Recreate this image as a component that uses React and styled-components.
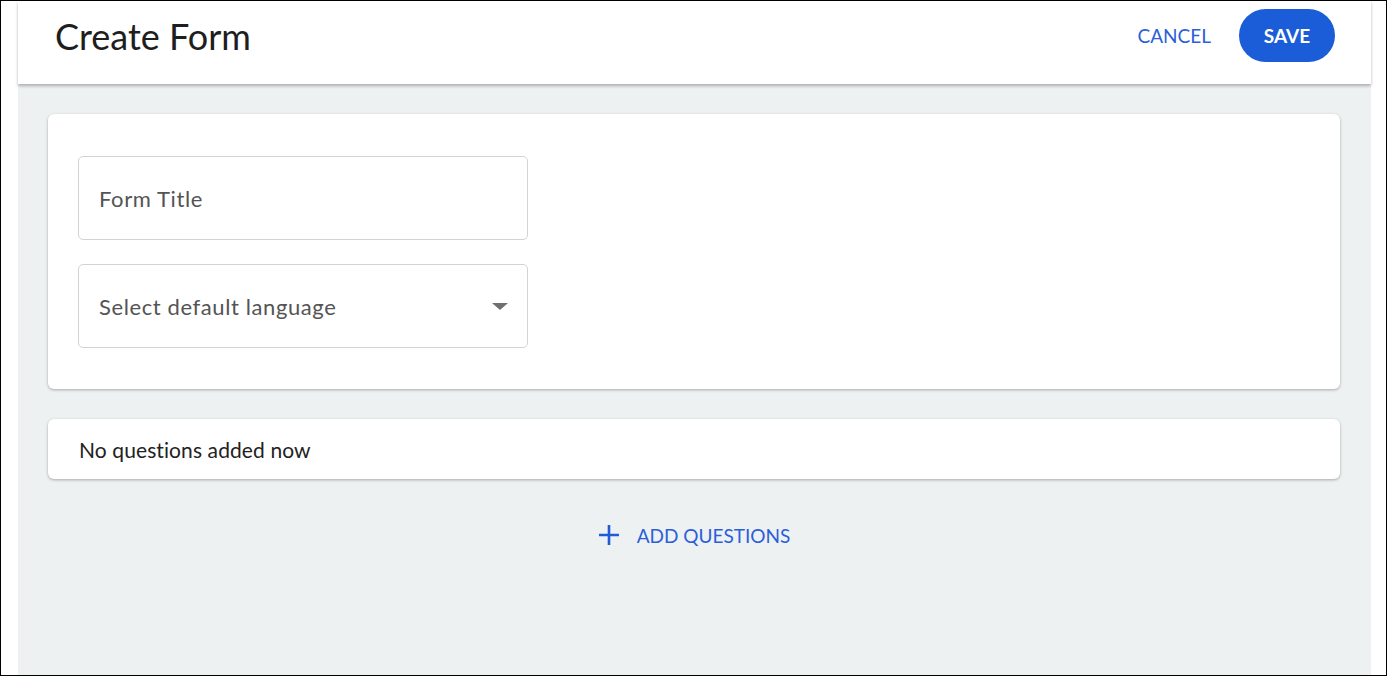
import React from 'react'
import styled, { createGlobalStyle } from 'styled-components'

const GlobalStyle = createGlobalStyle`
  html, body {
    margin: 0;
    padding: 0;
    background: #fff;
  }
  body {
    font-family: Lato, "Noto Sans", sans-serif;
  }
`

function App() {
  return (
    <>
      <GlobalStyle />
      <Frame>
        <Header>
          <Title>Create Form</Title>
          <Actions>
            <TextButton>Cancel</TextButton>
            <SaveButton>Save</SaveButton>
          </Actions>
        </Header>

        <Content>
          <Card>
            <Field>
              <FieldText>Form Title</FieldText>
            </Field>
            <Field>
              <FieldText>Select default language</FieldText>
              <Caret />
            </Field>
          </Card>

          <EmptyCard>No questions added now</EmptyCard>

          <AddRow>
            <AddButton>
              <svg width="22" height="22" viewBox="0 0 22 22">
                <path d="M11 1v20M1 11h20" stroke="#1f5bd8" strokeWidth="2.6" fill="none" />
              </svg>
              Add Questions
            </AddButton>
          </AddRow>
        </Content>
      </Frame>
    </>
  )
}

export default App

const Frame = styled.div`
  width: 1387px;
  height: 676px;
  box-sizing: border-box;
  border: 1px solid #000;
  padding: 0 15px 0 17px;
  display: flex;
  flex-direction: column;
  background: #fff;
  overflow: hidden;
`

const Header = styled.header`
  height: 83px;
  flex-shrink: 0;
  box-sizing: border-box;
  padding: 0 36px 14px 37px;
  display: flex;
  align-items: center;
  justify-content: space-between;
  background: #fff;
  position: relative;
  z-index: 1;
  box-shadow: 0 2px 3px rgba(0, 0, 0, 0.28);
`

const Title = styled.h1`
  margin: 0;
  font-size: 36px;
  font-weight: 400;
  color: #1e1e1e;
`

const Actions = styled.div`
  display: flex;
  align-items: center;
  gap: 28px;
`

const TextButton = styled.button`
  background: none;
  border: none;
  padding: 0;
  font-family: inherit;
  font-size: 19px;
  text-transform: uppercase;
  letter-spacing: 0;
  color: #2a5fd9;
  cursor: pointer;
`

const SaveButton = styled.button`
  width: 96px;
  height: 53px;
  border: none;
  border-radius: 27px;
  background: #1b5cd8;
  color: #fff;
  font-family: inherit;
  font-size: 19px;
  font-weight: 700;
  text-transform: uppercase;
  cursor: pointer;
`

const Content = styled.main`
  flex: 1;
  background: #eef1f2;
  padding: 30px 31px 30px 30px;
  display: flex;
  flex-direction: column;
`

const Card = styled.section`
  background: #fff;
  border-radius: 6px;
  box-shadow: 0 1px 3px rgba(0, 0, 0, 0.3);
  padding: 42px 30px 41px;
  display: flex;
  flex-direction: column;
  gap: 24px;
`

const Field = styled.div`
  width: 450px;
  height: 84px;
  box-sizing: border-box;
  border: 1px solid #d3d3d3;
  border-radius: 5px;
  padding: 0 19px 0 20px;
  display: flex;
  align-items: center;
  justify-content: space-between;
`

const FieldText = styled.span`
  font-size: 22px;
  letter-spacing: 0.6px;
  color: #545454;
`

const Caret = styled.span`
  width: 0;
  height: 0;
  border-left: 8px solid transparent;
  border-right: 8px solid transparent;
  border-top: 7px solid #707070;
`

const EmptyCard = styled.section`
  margin-top: 30px;
  height: 60px;
  box-sizing: border-box;
  background: #fff;
  border-radius: 6px;
  box-shadow: 0 1px 3px rgba(0, 0, 0, 0.3);
  padding-left: 31px;
  display: flex;
  align-items: center;
  font-size: 21px;
  letter-spacing: 0.1px;
  color: #222;
`

const AddRow = styled.div`
  margin-top: 36px;
  display: flex;
  justify-content: center;
`

const AddButton = styled.button`
  height: 40px;
  display: flex;
  align-items: center;
  gap: 17px;
  background: none;
  border: none;
  padding: 0;
  font-family: inherit;
  font-size: 19px;
  letter-spacing: 0;
  text-transform: uppercase;
  color: #2a5fd9;
  cursor: pointer;
`
